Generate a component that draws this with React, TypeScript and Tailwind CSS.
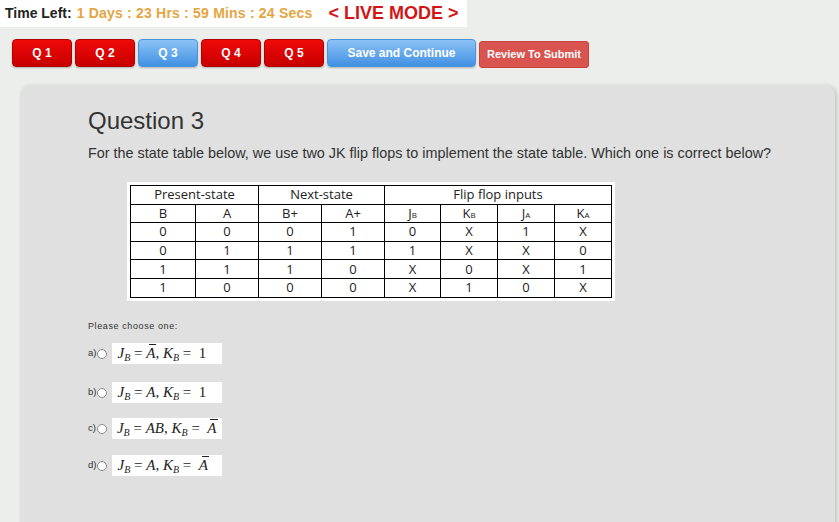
import React from "react"

const qButtons = [
    { label: "Q 1", active: false },
    { label: "Q 2", active: false },
    { label: "Q 3", active: true },
    { label: "Q 4", active: false },
    { label: "Q 5", active: false },
]

const rows = [
    ["0", "0", "0", "1", "0", "X", "1", "X"],
    ["0", "1", "1", "1", "1", "X", "X", "0"],
    ["1", "1", "1", "0", "X", "0", "X", "1"],
    ["1", "0", "0", "0", "X", "1", "0", "X"],
]

const colWidths = ["w-[65px]", "w-[63px]", "w-[63px]", "w-[63px]", "w-[56px]", "w-[57px]", "w-[57px]", "w-[57px]"]

function Sub({ base, sub }: { base: string; sub: string }) {
    return (
        <span className="italic">
            {base}
            <span className="text-[10px] relative top-[3px]">{sub}</span>
        </span>
    )
}

function Bar({ children }: { children: React.ReactNode }) {
    return (
        <span className="relative inline-block leading-none">
            <span className="absolute left-[3px] right-[-1px] top-[-2px] h-px bg-[#222]"></span>
            {children}
        </span>
    )
}

const options: { key: string; expr: React.ReactNode; y: string }[] = [
    {
        key: "a)",
        y: "mt-[10px]",
        expr: (
            <span>
                <Sub base="J" sub="B" /> = <Bar><span className="italic">A</span></Bar>, <Sub base="K" sub="B" /> =&nbsp; 1
            </span>
        ),
    },
    {
        key: "b)",
        y: "mt-[18px]",
        expr: (
            <span>
                <Sub base="J" sub="B" /> = <span className="italic">A</span>, <Sub base="K" sub="B" /> =&nbsp; 1
            </span>
        ),
    },
    {
        key: "c)",
        y: "mt-[15px]",
        expr: (
            <span>
                <Sub base="J" sub="B" /> = <span className="italic">AB</span>, <Sub base="K" sub="B" /> =&nbsp; <Bar><span className="italic">A</span></Bar>
            </span>
        ),
    },
    {
        key: "d)",
        y: "mt-[16px]",
        expr: (
            <span>
                <Sub base="J" sub="B" /> = <span className="italic">A</span>, <Sub base="K" sub="B" /> =&nbsp; <Bar><span className="italic">A</span></Bar>
            </span>
        ),
    },
]

export default function App() {
    return (
        <div className="h-[522px] overflow-hidden bg-[#eceeec] font-['Liberation_Sans',Arial,sans-serif]">
            {/* timer strip */}
            <div className="w-[467px] h-[27px] bg-white flex items-center pl-[5px] text-[14px] font-bold">
                <span className="text-[#222]">Time Left:</span>
                <span className="ml-[5px] text-[#e5a541] tracking-[0.2px]">1 Days : 23 Hrs : 59 Mins : 24 Secs</span>
                <span className="ml-[16px] text-[18px] text-[#d41515]">&lt; LIVE MODE &gt;</span>
            </div>

            {/* nav buttons */}
            <div className="flex items-start pl-[12px] mt-[12px] gap-[3px]">
                {qButtons.map((b) => (
                    <div
                        key={b.label}
                        className={
                            "w-[60px] h-[28px] rounded-[4px] flex items-center justify-center text-white text-[12px] font-bold shadow-[0_1px_2px_rgba(0,0,0,0.25)] " +
                            (b.active
                                ? "bg-gradient-to-b from-[#8cc2f5] to-[#3f90e2] border border-[#4b95dc]"
                                : "bg-gradient-to-b from-[#f00a0a] to-[#c80000] border border-[#b00000]")
                        }
                    >
                        {b.label}
                    </div>
                ))}
                <div className="w-[149px] h-[28px] rounded-[4px] flex items-center justify-center text-white text-[12px] font-bold bg-gradient-to-b from-[#8cc2f5] to-[#3f90e2] border border-[#4b95dc] shadow-[0_1px_2px_rgba(0,0,0,0.25)]">
                    Save and Continue
                </div>
                <div className="mt-[2px] w-[110px] h-[27px] rounded-[3px] flex items-center justify-center text-white text-[11px] font-bold bg-[#d9534f] border border-[#c9423e]">
                    Review To Submit
                </div>
            </div>

            {/* question panel */}
            <div className="ml-[20px] mr-[4px] mt-[17px] h-[460px] rounded-[10px] bg-[#dfe0df] shadow-[2px_1px_4px_rgba(0,0,0,0.18)] pl-[68px] pt-[23px] text-[#333]">
                <h2 className="text-[24px] leading-[26px]">Question 3</h2>
                <p className="mt-[11px] text-[14.4px] leading-[16px]">
                    For the state table below, we use two JK flip flops to implement the state table. Which one is correct below?
                </p>

                <div className="ml-[39px] mt-[21px] w-fit bg-white p-[3px] font-['Open_Sans','Noto_Sans',sans-serif] text-[13px] text-[#222]">
                    <table className="border-collapse">
                        <tbody>
                            <tr className="h-[18.6px] leading-none">
                                <td colSpan={2} className="border border-black text-center">Present-state</td>
                                <td colSpan={2} className="border border-black text-center">Next-state</td>
                                <td colSpan={4} className="border border-black text-center">Flip flop inputs</td>
                            </tr>
                            <tr className="h-[18.6px] leading-none">
                                {["B", "A", "B+", "A+"].map((h, i) => (
                                    <td key={h} className={"border border-black text-center " + colWidths[i]}>{h}</td>
                                ))}
                                {[["J", "B"], ["K", "B"], ["J", "A"], ["K", "A"]].map(([b, s], i) => (
                                    <td key={b + s} className={"border border-black text-center " + colWidths[i + 4]}>
                                        {b}
                                        <span className="text-[8px]">{s}</span>
                                    </td>
                                ))}
                            </tr>
                            {rows.map((r, ri) => (
                                <tr key={ri} className="h-[18.6px] leading-none">
                                    {r.map((c, ci) => (
                                        <td key={ci} className="border border-black text-center">{c}</td>
                                    ))}
                                </tr>
                            ))}
                        </tbody>
                    </table>
                </div>

                <div className="mt-[19px] text-[9px] tracking-[0.6px] text-[#333]">Please choose one:</div>

                {options.map((o) => (
                    <div key={o.key} className={"flex items-center " + o.y}>
                        <span className="text-[9.5px] text-[#333]">{o.key}</span>
                        <span className="ml-[1px] w-[10px] h-[10px] rounded-full border border-[#888] bg-white"></span>
                        <div className="ml-[5px] w-[110px] h-[21px] bg-white flex items-center pl-[5px] font-['Liberation_Serif',serif] text-[15px] text-[#222] whitespace-nowrap">
                            {o.expr}
                        </div>
                    </div>
                ))}
            </div>
        </div>
    )
}
